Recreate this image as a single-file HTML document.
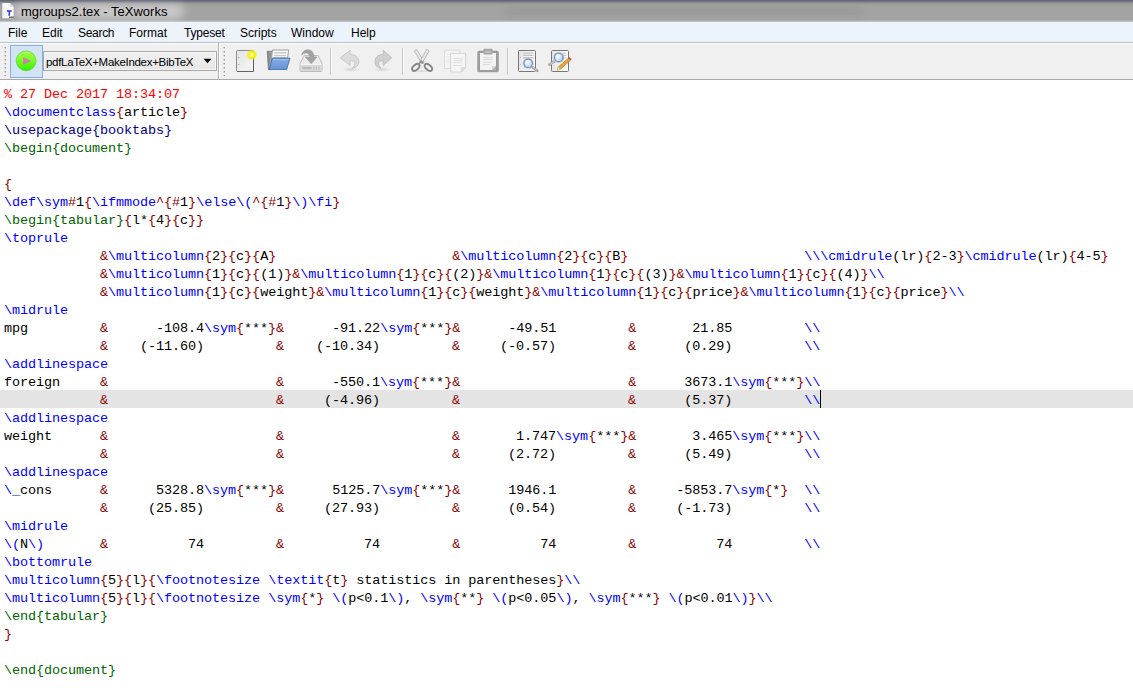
<!DOCTYPE html>
<html><head><meta charset="utf-8">
<style>
html,body{margin:0;padding:0}
body{width:1133px;height:688px;overflow:hidden;background:#fff;position:relative;font-family:"Liberation Sans",sans-serif}
.abs{position:absolute}
#title{left:0;top:0;width:1133px;height:22px;background:linear-gradient(#626474 0px,#686a7a 1px,#7e808c 2px,#92949a 3px,#9d9e9f 4px,#a3a3a3 6px,#a3a3a3 19px,#a6a6a6 20px,#b4b5b7 21px,#cdd0d4 22px)}
#glow{left:14px;top:4px;width:170px;height:15px;border-radius:8px;background:rgba(255,255,255,0.42);filter:blur(4px)}
#blur{left:506px;top:7px;width:356px;height:9px;background:rgba(120,120,120,0.22);filter:blur(3px)}
#ttext{left:21px;top:4px;font-size:13px;color:#000;white-space:nowrap}
#menu{left:0;top:22px;width:1133px;height:20px;background:#edf3fb;border-bottom:1px solid #b9c2cd}
#menu span{position:absolute;top:4px;font-size:12px;color:#000;white-space:nowrap}
#tool{left:0;top:43px;width:1133px;height:35px;background:#f0f0f0;border-top:1px solid #fcfcfc;border-bottom:1px solid #a9a9a9}
#ed{left:0;top:80px;width:1133px;height:608px;background:#fff}
#hl{left:0;top:390px;width:1133px;height:18px;background:#e4e4e4}
#cur{left:820px;top:390px;width:1px;height:18px;background:#000}
pre{position:absolute;left:4px;top:86px;margin:0;font-family:"Liberation Mono",monospace;font-size:13.5px;letter-spacing:-0.1013px;line-height:18px;color:#000}
pre i{font-style:normal}
.r{color:#ff0000}.k{color:#8b0000}.g{color:#006400}.n{color:#00008b}.b{color:#0000ff}
</style></head><body>
<div id="title" class="abs"></div>
<div id="glow" class="abs"></div><div id="blur" class="abs"></div>
<svg class="abs" style="left:0;top:0" width="20" height="22" viewBox="0 0 20 22"><defs><linearGradient id="gfile" x1="0" y1="0" x2="1" y2="0"><stop offset="0" stop-color="#f4f4f4"/><stop offset="1" stop-color="#ffffff"/></linearGradient></defs><path d="M2.3 3 L9.8 3 L13.5 6.8 L13.5 18.2 L2.3 18.2 Z" fill="url(#gfile)"/><path d="M9.8 3 L9.8 6.8 L13.5 6.8 Z" fill="#d8d8d8"/><path d="M6.8 10.2 L11.8 10.2 L11.6 11.8 L10.2 11.8 L9.9 15.8 L8.4 15.8 L8.7 11.8 L7 11.8 Z" fill="#3030e8"/><rect x="9" y="16.5" width="4.8" height="1.4" fill="#3a3a3a" opacity="0.8"/></svg>
<div id="ttext" class="abs">mgroups2.tex - TeXworks</div>
<div id="menu" class="abs"><span style="left:8px">File</span><span style="left:42px">Edit</span><span style="left:78px;letter-spacing:-0.3px">Search</span><span style="left:129px">Format</span><span style="left:184px;letter-spacing:-0.2px">Typeset</span><span style="left:240px">Scripts</span><span style="left:291px">Window</span><span style="left:351px">Help</span></div>
<div id="tool" class="abs"></div>
<svg class="abs" style="left:0;top:0" width="600" height="80" viewBox="0 0 600 80">
<defs>
<linearGradient id="gball" x1="0" y1="0" x2="0" y2="1"><stop offset="0" stop-color="#9cff3c"/><stop offset="0.45" stop-color="#7cff28"/><stop offset="1" stop-color="#30f000"/></linearGradient><linearGradient id="gtri" x1="0" y1="0" x2="1" y2="1"><stop offset="0" stop-color="#d88c8c"/><stop offset="1" stop-color="#b078c8"/></linearGradient>
<linearGradient id="gcombo" x1="0" y1="0" x2="0" y2="1"><stop offset="0" stop-color="#f1f1f1"/><stop offset="1" stop-color="#e6e6e6"/></linearGradient>
<linearGradient id="gpaper" x1="0" y1="0" x2="1" y2="1"><stop offset="0" stop-color="#e2e2e2"/><stop offset="1" stop-color="#f8f8f8"/></linearGradient>
<radialGradient id="gglow" cx="0.5" cy="0.5" r="0.5"><stop offset="0" stop-color="#ffffff"/><stop offset="0.22" stop-color="#ffff80"/><stop offset="0.5" stop-color="#f2f000"/><stop offset="0.78" stop-color="#f2f000" stop-opacity="0.55"/><stop offset="1" stop-color="#f2f000" stop-opacity="0"/></radialGradient>
<linearGradient id="gblue" x1="0" y1="0" x2="0" y2="1"><stop offset="0" stop-color="#84ade2"/><stop offset="1" stop-color="#6595d6"/></linearGradient>
<radialGradient id="glens" cx="0.4" cy="0.35" r="0.7"><stop offset="0" stop-color="#ffffff"/><stop offset="1" stop-color="#b8cde8"/></radialGradient>
<radialGradient id="gshadow" cx="0.5" cy="0.5" r="0.5"><stop offset="0" stop-color="#000" stop-opacity="0.12"/><stop offset="1" stop-color="#000" stop-opacity="0"/></radialGradient>
<linearGradient id="gdoc" x1="0" y1="0" x2="1" y2="0"><stop offset="0" stop-color="#e4e4e4"/><stop offset="0.25" stop-color="#ededed"/><stop offset="1" stop-color="#fafafa"/></linearGradient>
</defs>
<!-- grips -->
<g fill="#a0a0a0">
<rect x="4.5" y="47" width="1.5" height="1.5"/><rect x="4.5" y="51" width="1.5" height="1.5"/><rect x="4.5" y="55" width="1.5" height="1.5"/><rect x="4.5" y="59" width="1.5" height="1.5"/><rect x="4.5" y="63" width="1.5" height="1.5"/><rect x="4.5" y="67" width="1.5" height="1.5"/><rect x="4.5" y="71" width="1.5" height="1.5"/><rect x="4.5" y="75" width="1.5" height="1"/>
<rect x="223.5" y="47" width="1.5" height="1.5"/><rect x="223.5" y="51" width="1.5" height="1.5"/><rect x="223.5" y="55" width="1.5" height="1.5"/><rect x="223.5" y="59" width="1.5" height="1.5"/><rect x="223.5" y="63" width="1.5" height="1.5"/><rect x="223.5" y="67" width="1.5" height="1.5"/><rect x="223.5" y="71" width="1.5" height="1.5"/><rect x="223.5" y="75" width="1.5" height="1"/>
</g>
<!-- toolbar split line -->
<rect x="218" y="43" width="1" height="36" fill="#b4b4b4"/><rect x="219" y="43" width="1" height="36" fill="#ffffff"/>
<!-- run button -->
<rect x="10.5" y="45.5" width="32" height="32" fill="#d3e3f3" stroke="#7eb2e8" stroke-width="1"/>
<circle cx="26.1" cy="60.8" r="9.9" fill="url(#gball)" stroke="#4ad02a" stroke-width="0.6"/><path d="M19 55.5 Q26 49.5 33 55.5" fill="none" stroke="#d8ffa8" stroke-width="0.8" opacity="0.7"/>
<path d="M23 57 L31.2 61 L23 65.1 Z" fill="url(#gtri)"/>
<!-- combo -->
<rect x="43.5" y="51.5" width="173" height="19" fill="url(#gcombo)" stroke="#a8a8a8"/>
<rect x="44.5" y="52.5" width="171" height="17" fill="none" stroke="#fafafa" stroke-opacity="0.7"/>
<path d="M203.6 58.8 L211.4 58.8 L207.5 63.2 Z" fill="#000"/>
<!-- new doc -->
<rect x="236.5" y="50.5" width="17" height="21" rx="1" fill="url(#gpaper)" stroke="#8a8a8a"/><path d="M253.5 52 L253.5 71.5 L237 71.5" fill="none" stroke="#606060" stroke-width="1"/>
<circle cx="238.8" cy="57.5" r="0.6" fill="#888"/><circle cx="238.8" cy="64.5" r="0.6" fill="#888"/>
<circle cx="251.8" cy="54.8" r="5.6" fill="url(#gglow)"/>
<!-- open folder -->
<path d="M267.2 51.3 L272.6 51.3 L271.2 69 L268.4 69.6 Z" fill="#8f8f8f" stroke="#6c6c6c" stroke-width="0.7"/>
<path d="M269.5 52.5 L271.5 52.5 L270.5 66" stroke="#c8c8c8" stroke-width="0.6" fill="none"/>
<path d="M272.4 50 L288.6 50 L287.6 58.6 L271.6 58.6 Z" fill="#fafafa" stroke="#8a8a8a" stroke-width="0.8"/>
<rect x="274.4" y="52.2" width="12" height="1.3" fill="#c2c2c2"/><rect x="274.2" y="55" width="12" height="1.3" fill="#c6c6c6"/><rect x="273" y="57" width="13.8" height="1.5" fill="#bfbfbf"/>
<path d="M272.4 58.2 L290 58.2 L286.6 69.4 L268.8 69.4 Q270.9 66 271.3 62 Z" fill="url(#gblue)" stroke="#3d6db8" stroke-width="0.9"/>
<path d="M273.2 59.6 L288.6 59.6" stroke="#b0cdf2" stroke-width="0.7"/>
<!-- save (disabled) -->
<path d="M304.2 55.5 L318.2 55.5 L322 63.4 L322 70.5 Q322 71.5 321 71.5 L301 71.5 Q300 71.5 300 70.5 L300 63.4 Z" fill="#ebebeb" stroke="#bcbcbc" stroke-width="1"/>
<rect x="300.6" y="64.6" width="20.8" height="6.4" fill="#d9d9d9"/>
<rect x="300.6" y="64" width="20.8" height="0.8" fill="#f6f6f6"/>
<rect x="302.2" y="66.8" width="9.5" height="2.4" fill="#bababa"/>
<rect x="313.3" y="66.5" width="1.1" height="3" fill="#bdbdbd"/><rect x="315.8" y="66.5" width="1.1" height="3" fill="#bdbdbd"/><rect x="318.3" y="66.5" width="1.1" height="3" fill="#bdbdbd"/>
<path d="M301.6 55.2 Q302.8 49.6 308.3 49.8 Q313.6 50.1 314.1 56.9 L317 56.9 L311.3 63.8 L305.2 56.9 L309.9 56.9 Q309.4 53 306.1 53 Q303.6 53.1 301.6 55.2 Z" fill="#a2a2a2" stroke="#979797" stroke-width="0.5"/>
<!-- separators -->
<rect x="330" y="48" width="1" height="27" fill="#c6c6c6"/><rect x="331" y="48" width="1" height="27" fill="#fbfbfb"/>
<rect x="402" y="48" width="1" height="27" fill="#c6c6c6"/><rect x="403" y="48" width="1" height="27" fill="#fbfbfb"/>
<rect x="507" y="48" width="1" height="27" fill="#c6c6c6"/><rect x="508" y="48" width="1" height="27" fill="#fbfbfb"/>
<!-- undo -->
<ellipse cx="351" cy="69.5" rx="9" ry="2.5" fill="url(#gshadow)"/>
<path d="M340.2 57.8 L350 50.3 L350 54.5 Q358.8 54.5 358.8 62 Q358.8 67 352 68.2 Q355 66 355 63 Q355 60.8 350 60.8 L350 65.5 Z" fill="#dcdcdc" stroke="#c2c2c2" stroke-width="0.8"/>
<!-- redo -->
<ellipse cx="382" cy="69.5" rx="9" ry="2.5" fill="url(#gshadow)"/>
<path d="M391.8 57.8 L383.2 50.3 L383.2 54.5 Q375 54.5 375 62 Q375 67 381 68.2 Q378.5 66 378.5 63 Q378.5 60.8 383.2 60.8 L383.2 65.5 Z" fill="#d0d0d0" stroke="#b5b5b5" stroke-width="0.8"/>
<!-- scissors -->
<ellipse cx="422" cy="71.2" rx="8" ry="1.6" fill="url(#gshadow)"/>
<path d="M414.3 51.2 L416.6 49.3 L424.2 61.8 L422 63.4 Z" fill="#e8e8e8" stroke="#a2a2a2" stroke-width="0.7"/>
<path d="M429.1 51.2 L426.8 49.3 L419.6 61.8 L421.8 63.4 Z" fill="#e8e8e8" stroke="#a2a2a2" stroke-width="0.7"/>
<ellipse cx="415.8" cy="67.4" rx="4.4" ry="2.5" transform="rotate(-42 415.8 67.4)" fill="none" stroke="#878787" stroke-width="1.9"/>
<ellipse cx="428.4" cy="67.4" rx="4.4" ry="2.5" transform="rotate(42 428.4 67.4)" fill="none" stroke="#878787" stroke-width="1.9"/>
<path d="M419.2 63.6 L421.2 61.2 L423.4 63.6" fill="none" stroke="#878787" stroke-width="1.5"/>
<!-- copy -->
<path d="M444.5 50.3 L459.7 50.3 L459.7 68.5 L444.5 68.5 Z" fill="#f4f4f4" stroke="#dadada" stroke-width="0.9"/>
<g fill="#e0e0e0"><rect x="447" y="54.3" width="3" height="0.7"/><rect x="447" y="56.5" width="3" height="0.7"/><rect x="447" y="59.3" width="3" height="0.7"/><rect x="447" y="61.4" width="3" height="0.7"/></g>
<path d="M450.6 53.4 L465.7 53.4 L465.7 67.6 L461.3 72 L450.6 72 Z" fill="#f6f6f6" stroke="#d0d0d0" stroke-width="0.9"/>
<path d="M465.7 67.6 L461.3 67.6 L461.3 72 Z" fill="#e2e2e2" stroke="#cdcdcd" stroke-width="0.6"/>
<g fill="#d6d6d6"><rect x="453" y="58.2" width="10" height="0.7"/><rect x="453" y="60.2" width="10" height="0.7"/><rect x="453" y="62.4" width="9" height="0.7"/><rect x="453" y="65.2" width="10" height="0.7"/></g>
<!-- paste -->
<rect x="477.3" y="50.8" width="21.5" height="21.5" rx="1.6" fill="#9c9c9c"/>
<rect x="480" y="53" width="16" height="17" fill="#f3f3f3"/>
<rect x="483.5" y="48.8" width="9" height="5.8" rx="0.8" fill="#a4a4a4"/>
<rect x="484.6" y="50.6" width="6.8" height="2.6" fill="#bdbdbd"/>
<g fill="#cfcfcf"><rect x="483" y="57.2" width="10" height="0.7"/><rect x="483" y="59.4" width="9.5" height="0.7"/><rect x="483" y="62.2" width="9" height="0.7"/><rect x="483" y="64.3" width="6.5" height="0.7"/></g>
<path d="M496 66 L492 66 L492 70 Z" fill="#d8d8d8"/><path d="M492 70 L496 66 L496 70 Z" fill="#b0b0b0"/>
<!-- find -->
<rect x="518.5" y="50.5" width="17" height="21" rx="1" fill="url(#gdoc)" stroke="#767676"/>
<g fill="#c4c4c4"><rect x="523" y="52.5" width="10.5" height="1.2"/><rect x="523" y="54.8" width="10.5" height="1.2"/><rect x="523" y="57.2" width="10.5" height="1.2"/></g>
<circle cx="520.5" cy="57.5" r="0.5" fill="#999"/><circle cx="520.5" cy="64.5" r="0.5" fill="#999"/>
<path d="M531.5 66.5 L537.3 70.8" stroke="#9c9c9c" stroke-width="2.6" stroke-linecap="round"/><path d="M533 67.2 L537 70.2" stroke="#e8e8e8" stroke-width="0.7" stroke-linecap="round"/>
<circle cx="528.2" cy="63.3" r="5.5" fill="#c4c4c4"/>
<circle cx="528.2" cy="63.3" r="4.2" fill="url(#glens)" stroke="#6797d8" stroke-width="1.1"/>
<!-- replace -->
<rect x="551.5" y="50.5" width="17" height="21" rx="1" fill="url(#gdoc)" stroke="#767676"/><g fill="#d0d0d0"><rect x="556" y="52.8" width="10.5" height="1"/><rect x="556" y="55" width="10.5" height="1"/><rect x="556" y="57.3" width="10.5" height="1"/></g>
<path d="M555 61 L549.4 64.6" stroke="#a4a4a4" stroke-width="2.6" stroke-linecap="round"/><path d="M554 61.8 L550.2 64.2" stroke="#ececec" stroke-width="0.7" stroke-linecap="round"/>
<circle cx="558.7" cy="57.4" r="5.5" fill="#c4c4c4"/>
<circle cx="558.7" cy="57.4" r="4.2" fill="url(#glens)" stroke="#6797d8" stroke-width="1.1"/>
<path d="M557.2 70.2 L558.2 67 L568.3 58.2 L570.5 60.3 L560.4 69.2 Z" fill="#e3a63a" stroke="#a87420" stroke-width="0.6"/>
<path d="M568.3 58.2 L569.5 57.2 L571.6 59.3 L570.5 60.3 Z" fill="#e03c3c"/>
<path d="M557.2 70.2 L558.2 67 L560.4 69.2 Z" fill="#f2e0b0"/>
</svg>
<div class="abs" style="left:46px;top:56px;font-size:11.5px;letter-spacing:-0.3px;white-space:nowrap;color:#000">pdfLaTeX+MakeIndex+BibTeX</div>

<div id="ed" class="abs"></div>
<div id="hl" class="abs"></div>
<pre><i class="r">% 27 Dec 2017 18:34:07</i>
<i class="b">\documentclass</i><i class="k">{</i>article<i class="k">}</i>
<i class="n">\usepackage{booktabs}</i>
<i class="g">\begin{document}</i>

<i class="k">{</i>
<i class="b">\def\sym</i><i class="k">#</i>1<i class="k">{</i><i class="b">\ifmmode</i><i class="k">^{#</i>1<i class="k">}</i><i class="b">\else\(</i><i class="k">^{#</i>1<i class="k">}</i><i class="b">\)\fi</i><i class="k">}</i>
<i class="g">\begin{tabular}</i><i class="k">{</i>l*<i class="k">{</i>4<i class="k">}{</i>c<i class="k">}}</i>
<i class="b">\toprule</i>
            <i class="k">&amp;</i><i class="b">\multicolumn</i><i class="k">{</i>2<i class="k">}{</i>c<i class="k">}{</i>A<i class="k">}</i>                      <i class="k">&amp;</i><i class="b">\multicolumn</i><i class="k">{</i>2<i class="k">}{</i>c<i class="k">}{</i>B<i class="k">}</i>                      <i class="b">\\\cmidrule</i>(lr)<i class="k">{</i>2-3<i class="k">}</i><i class="b">\cmidrule</i>(lr)<i class="k">{</i>4-5<i class="k">}</i>
            <i class="k">&amp;</i><i class="b">\multicolumn</i><i class="k">{</i>1<i class="k">}{</i>c<i class="k">}{</i>(1)<i class="k">}&amp;</i><i class="b">\multicolumn</i><i class="k">{</i>1<i class="k">}{</i>c<i class="k">}{</i>(2)<i class="k">}&amp;</i><i class="b">\multicolumn</i><i class="k">{</i>1<i class="k">}{</i>c<i class="k">}{</i>(3)<i class="k">}&amp;</i><i class="b">\multicolumn</i><i class="k">{</i>1<i class="k">}{</i>c<i class="k">}{</i>(4)<i class="k">}</i><i class="b">\\</i>
            <i class="k">&amp;</i><i class="b">\multicolumn</i><i class="k">{</i>1<i class="k">}{</i>c<i class="k">}{</i>weight<i class="k">}&amp;</i><i class="b">\multicolumn</i><i class="k">{</i>1<i class="k">}{</i>c<i class="k">}{</i>weight<i class="k">}&amp;</i><i class="b">\multicolumn</i><i class="k">{</i>1<i class="k">}{</i>c<i class="k">}{</i>price<i class="k">}&amp;</i><i class="b">\multicolumn</i><i class="k">{</i>1<i class="k">}{</i>c<i class="k">}{</i>price<i class="k">}</i><i class="b">\\</i>
<i class="b">\midrule</i>
mpg         <i class="k">&amp;</i>      -108.4<i class="b">\sym</i><i class="k">{</i>***<i class="k">}&amp;</i>      -91.22<i class="b">\sym</i><i class="k">{</i>***<i class="k">}&amp;</i>      -49.51         <i class="k">&amp;</i>       21.85         <i class="b">\\</i>
            <i class="k">&amp;</i>    (-11.60)         <i class="k">&amp;</i>    (-10.34)         <i class="k">&amp;</i>     (-0.57)         <i class="k">&amp;</i>      (0.29)         <i class="b">\\</i>
<i class="b">\addlinespace</i>
foreign     <i class="k">&amp;</i>                     <i class="k">&amp;</i>      -550.1<i class="b">\sym</i><i class="k">{</i>***<i class="k">}&amp;</i>                     <i class="k">&amp;</i>      3673.1<i class="b">\sym</i><i class="k">{</i>***<i class="k">}</i><i class="b">\\</i>
            <i class="k">&amp;</i>                     <i class="k">&amp;</i>     (-4.96)         <i class="k">&amp;</i>                     <i class="k">&amp;</i>      (5.37)         <i class="b">\\</i>
<i class="b">\addlinespace</i>
weight      <i class="k">&amp;</i>                     <i class="k">&amp;</i>                     <i class="k">&amp;</i>       1.747<i class="b">\sym</i><i class="k">{</i>***<i class="k">}&amp;</i>       3.465<i class="b">\sym</i><i class="k">{</i>***<i class="k">}</i><i class="b">\\</i>
            <i class="k">&amp;</i>                     <i class="k">&amp;</i>                     <i class="k">&amp;</i>      (2.72)         <i class="k">&amp;</i>      (5.49)         <i class="b">\\</i>
<i class="b">\addlinespace</i>
<i class="b">\_</i>cons      <i class="k">&amp;</i>      5328.8<i class="b">\sym</i><i class="k">{</i>***<i class="k">}&amp;</i>      5125.7<i class="b">\sym</i><i class="k">{</i>***<i class="k">}&amp;</i>      1946.1         <i class="k">&amp;</i>     -5853.7<i class="b">\sym</i><i class="k">{</i>*<i class="k">}</i>  <i class="b">\\</i>
            <i class="k">&amp;</i>     (25.85)         <i class="k">&amp;</i>     (27.93)         <i class="k">&amp;</i>      (0.54)         <i class="k">&amp;</i>     (-1.73)         <i class="b">\\</i>
<i class="b">\midrule</i>
<i class="b">\(</i>N<i class="b">\)</i>       <i class="k">&amp;</i>          74         <i class="k">&amp;</i>          74         <i class="k">&amp;</i>          74         <i class="k">&amp;</i>          74         <i class="b">\\</i>
<i class="b">\bottomrule</i>
<i class="b">\multicolumn</i><i class="k">{</i>5<i class="k">}{</i>l<i class="k">}{</i><i class="b">\footnotesize</i> <i class="b">\textit</i><i class="k">{</i>t<i class="k">}</i> statistics in parentheses<i class="k">}</i><i class="b">\\</i>
<i class="b">\multicolumn</i><i class="k">{</i>5<i class="k">}{</i>l<i class="k">}{</i><i class="b">\footnotesize</i> <i class="b">\sym</i><i class="k">{</i>*<i class="k">}</i> <i class="b">\(</i>p&lt;0.1<i class="b">\)</i>, <i class="b">\sym</i><i class="k">{</i>**<i class="k">}</i> <i class="b">\(</i>p&lt;0.05<i class="b">\)</i>, <i class="b">\sym</i><i class="k">{</i>***<i class="k">}</i> <i class="b">\(</i>p&lt;0.01<i class="b">\)</i><i class="k">}</i><i class="b">\\</i>
<i class="g">\end{tabular}</i>
<i class="k">}</i>

<i class="g">\end{document}</i></pre>
<div id="cur" class="abs"></div>
</body></html>
